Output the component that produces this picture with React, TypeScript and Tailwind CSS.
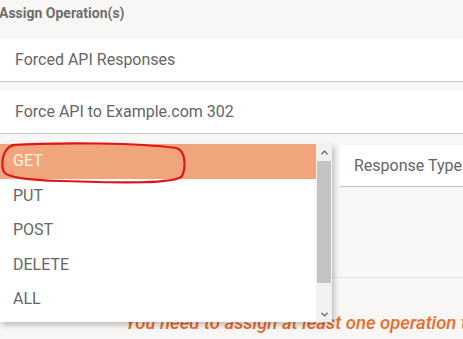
import { ChevronUp, ChevronDown } from 'lucide-react';

const methods = ['GET', 'PUT', 'POST', 'DELETE', 'ALL'];

function OperationDropdown() {
  return (
    <div className="absolute left-0 top-[144px] w-[332px] h-[178px] flex bg-white shadow-[2px_3px_6px_rgba(0,0,0,0.25)]">
      <ul className="flex-1 flex flex-col">
        {methods.map((m, i) => (
          <li
            key={m}
            className={
              i === 0
                ? 'h-[34.5px] flex items-center pl-[13px] text-[16px] bg-[#f0a57c] text-[#fff4ec]'
                : 'h-[34.5px] flex items-center pl-[13px] text-[16px] text-[#666]'
            }
          >
            {m}
          </li>
        ))}
      </ul>
      <div className="w-[16px] flex flex-col bg-[#f1f1f1]">
        <div className="h-[17px] flex items-center justify-center text-[#505050]">
          <ChevronUp size={11} strokeWidth={2.5} />
        </div>
        <div className="mx-[1px] h-[122px] bg-[#c4c4c4]" />
        <div className="flex-1 flex items-end justify-center pb-[2px] text-[#505050]">
          <ChevronDown size={11} strokeWidth={2.5} />
        </div>
      </div>
    </div>
  );
}

export default function App() {
  return (
    <div className="relative w-[463px] h-[339px] overflow-hidden bg-[#f8f7f5] font-['Roboto',sans-serif] text-[#666]">
      <div className="h-[39px] pt-[3px] -ml-[1px] text-[14px] font-bold text-[#6e6e6e]">
        Assign Operation(s)
      </div>

      <div className="flex flex-col gap-[9px]">
        <div className="h-[43px] bg-white border-b border-[#c6c6c6] pl-[15px] flex items-center text-[16px]">
          Forced API Responses
        </div>
        <div className="h-[43px] bg-white border-b border-[#c6c6c6] pl-[15px] flex items-center text-[16px]">
          Force API to Example.com 302
        </div>
      </div>

      <div className="mt-[10px] flex gap-[8px]">
        <div className="w-[332px] h-[43px] bg-white border-b border-[#c6c6c6]" />
        <div className="flex-1 h-[42px] mt-[1px] bg-white border-b border-[#c6c6c6] pl-[14px] flex items-center text-[16px] whitespace-nowrap">
          Response Type
        </div>
      </div>

      <div className="ml-[332px] mt-[90px] border-t border-[#e4e3e1]" />

      <div className="mt-[35px] pl-[125px] whitespace-nowrap text-[18.5px] leading-[20px] italic font-medium text-[#f0692a]">
        You need to assign at least one operation to this response
      </div>

      <OperationDropdown />

      <svg className="absolute left-0 top-[140px] pointer-events-none" width="190" height="46" viewBox="0 0 190 46" fill="none">
        <path
          d="M12 5 C60 2 140 3 176 8 C186 10 186 28 182 36 C176 44 120 43 60 41 C30 40 8 38 4 32 C1 26 2 14 8 8 C10 6 12 5 16 5"
          stroke="#e0141b"
          strokeWidth="2.2"
          strokeLinecap="round"
        />
      </svg>
    </div>
  );
}
